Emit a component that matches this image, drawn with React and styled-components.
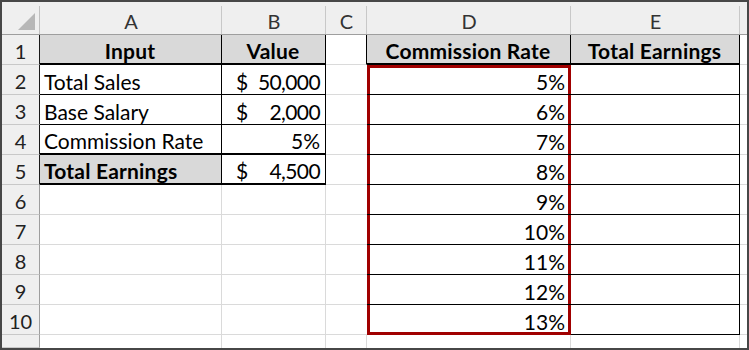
import React from "react";
import styled, { createGlobalStyle, css } from "styled-components";

const Global = createGlobalStyle`
  html, body { margin: 0; padding: 0; background: #ffffff; }
  body { font-family: Lato, "Open Sans", sans-serif; }
`;

const GRID = "#dadada";
const HEADLINE = "#c8c8c8";
const RED = "#a00000";

const Sheet = styled.div`
  width: 749px;
  height: 350px;
  box-sizing: border-box;
  border: 2px solid #474747;
  display: grid;
  grid-template-columns: 38px 182px 104px 41px 204px 169px 1fr;
  grid-template-rows: 33px repeat(10, 30px) 1fr;
  background: #ffffff;
  overflow: hidden;
`;

const HeadCell = styled.div`
  position: relative;
  background: #efefef;
  border-bottom: 1px solid #9e9e9e;
  box-sizing: border-box;
  display: flex;
  align-items: center;
  justify-content: center;
  padding-top: 5px;
  font-size: 20px;
  color: #333;
  &::after {
    content: "";
    position: absolute;
    right: 0;
    top: 4px;
    bottom: 0;
    width: 1px;
    background: ${(p) => (p.$corner ? "#c0c0c0" : HEADLINE)};
  }
`;

const Corner = styled.svg`
  position: absolute;
  left: 15px;
  top: 10px;
`;

const RowNum = styled.div`
  background: #efefef;
  box-sizing: border-box;
  border-right: 1px solid ${(p) => (p.$dark ? "#1a1a1a" : "#9e9e9e")};
  border-bottom: 1px solid ${HEADLINE};
  display: flex;
  align-items: center;
  justify-content: center;
  padding-top: 2px;
  font-size: 20px;
  color: #222;
`;

const Cell = styled.div`
  box-sizing: border-box;
  display: flex;
  align-items: center;
  padding: 3px 5px 0 4px;
  font-size: 21px;
  color: #000;
  white-space: nowrap;
  overflow: hidden;
  background: ${(p) => (p.$fill ? "#d9d9d9" : "#ffffff")};
  font-weight: ${(p) => (p.$bold ? 700 : 400)};
  letter-spacing: ${(p) => (p.$bold ? "0.2px" : "0")};
  justify-content: ${(p) =>
    p.$align === "center" ? "center" : p.$align === "right" ? "flex-end" : "space-between"};
  border-right: ${(p) => p.$r ?? `1px solid ${GRID}`};
  border-bottom: ${(p) => p.$b ?? `1px solid ${GRID}`};
  ${(p) =>
    p.$red &&
    css`
      box-shadow: inset 3px 0 0 ${RED}, inset -3px 0 0 ${RED}
        ${p.$redTop ? `, inset 0 3px 0 ${RED}` : ""}
        ${p.$redBottom ? `, inset 0 -3px 0 ${RED}` : ""};
      padding-right: 6px;
    `}
`;

const Dollar = styled.span`
  padding-left: 10px;
`;

const Amount = styled.span`
  letter-spacing: -0.6px;
`;

const BLACK = "1px solid #000";
const THICK = "2px solid #000";

const cols = ["A", "B", "C", "D", "E", ""];
const rates = ["5%", "6%", "7%", "8%", "9%", "10%", "11%", "12%", "13%"];

const leftTable = {
  1: ["Input", null],
  2: ["Total Sales", ["$", "50,000"]],
  3: ["Base Salary", ["$", "2,000"]],
  4: ["Commission Rate", "5%"],
  5: ["Total Earnings", ["$", "4,500"]],
};

function Money({ v }) {
  return (
    <>
      <Dollar>{v[0]}</Dollar>
      <Amount>{v[1]}</Amount>
    </>
  );
}

function Row({ n }) {
  const inLeft = n >= 1 && n <= 5;
  const rowB = n === 1 || n === 4 || n === 5 ? THICK : BLACK;
  const lt = leftTable[n];
  const rightB = n === 1 ? THICK : BLACK;
  return (
    <>
      <RowNum $dark={inLeft}>{n}</RowNum>
      {inLeft ? (
        <Cell
          $fill={n === 1 || n === 5}
          $bold={n === 1 || n === 5}
          $align={n === 1 ? "center" : "left"}
          $r={BLACK}
          $b={rowB}
        >
          {lt[0]}
        </Cell>
      ) : (
        <Cell />
      )}
      {inLeft ? (
        n === 1 ? (
          <Cell $fill $bold $align="center" $r={BLACK} $b={rowB}>
            Value
          </Cell>
        ) : typeof lt[1] === "string" ? (
          <Cell $align="right" $r={BLACK} $b={rowB}>
            {lt[1]}
          </Cell>
        ) : (
          <Cell $r={BLACK} $b={rowB}>
            <Money v={lt[1]} />
          </Cell>
        )
      ) : (
        <Cell />
      )}
      <Cell $r={n === 1 ? BLACK : "0"} />
      {n === 1 ? (
        <Cell $fill $bold $align="center" $r={BLACK} $b={THICK}>
          Commission Rate
        </Cell>
      ) : (
        <Cell
          $align="right"
          $r="0"
          $b={n === 10 ? "0" : BLACK}
          $red
          $redTop={n === 2}
          $redBottom={n === 10}
        >
          {rates[n - 2]}
        </Cell>
      )}
      {n === 1 ? (
        <Cell $fill $bold $align="center" $r={BLACK} $b={THICK}>
          Total Earnings
        </Cell>
      ) : (
        <Cell $r={BLACK} $b={rightB} />
      )}
      <Cell />
    </>
  );
}

export default function App() {
  const rows = [1, 2, 3, 4, 5, 6, 7, 8, 9, 10];
  return (
    <>
      <Global />
      <Sheet>
        <HeadCell $corner>
          <Corner width="19" height="19" viewBox="0 0 19 19">
            <polygon points="18,1 18,18 1,18" fill="#b7b7b7" />
          </Corner>
        </HeadCell>
        {cols.map((c, i) => (
          <HeadCell key={i}>{c}</HeadCell>
        ))}
        {rows.map((n) => (
          <Row key={n} n={n} />
        ))}
        <RowNum />
        <Cell $b="0" />
        <Cell $b="0" />
        <Cell $b="0" />
        <Cell $b="0" />
        <Cell $b="0" />
        <Cell $b="0" />
      </Sheet>
    </>
  );
}
